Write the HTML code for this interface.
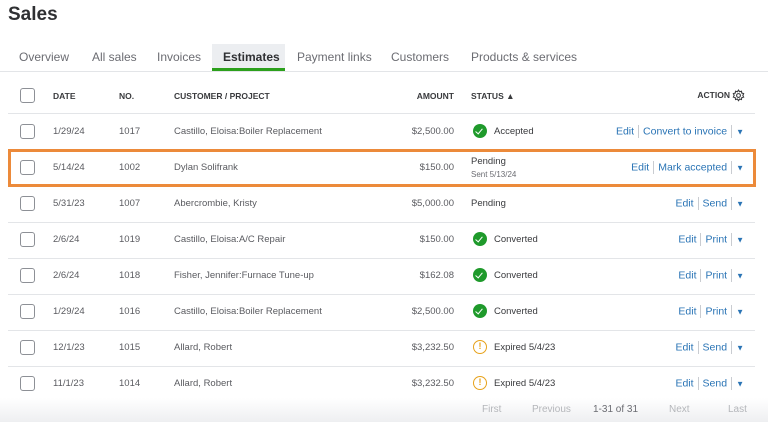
<!DOCTYPE html>
<html><head><style>
*{margin:0;padding:0;box-sizing:border-box}
body{width:768px;height:422px;overflow:hidden;background:#fff;font-family:"Liberation Sans",sans-serif;color:#393a3d;position:relative}
.a{position:absolute;white-space:nowrap}
.h1{left:8px;top:4px;font-size:19px;font-weight:bold;color:#2f3033}
.tab{top:50px;font-size:12px;color:#6b6c72}
.hd{font-size:8.5px;font-weight:bold;color:#393a3d}
.line{position:absolute;left:8px;width:747px;height:1px;background:#e3e5e8}
.cb{position:absolute;left:20px;width:15px;height:15px;border:1px solid #8d9096;border-radius:3px;background:#fff}
.c{font-size:9.5px;color:#5a5b60}
.lk{color:#2a74b5;font-size:10.5px}
.sep{display:inline-block;width:1px;height:13px;background:#c9ccd1;vertical-align:middle;margin:0 4px}
.ok{position:absolute;left:473px;width:14px;height:14px;border-radius:50%;background:#1f9a2b}
.ok:after{content:"";position:absolute;left:4px;top:3px;width:3px;height:6px;border:solid #fff;border-width:0 1.6px 1.6px 0;transform:rotate(40deg)}
.ex{position:absolute;left:473px;width:14px;height:14px;border-radius:50%;border:1.5px solid #e7a21b;color:#e7a21b;font-size:9px;font-weight:bold;text-align:center;line-height:11px}
.pg{top:404px;font-size:10px;color:#b4b6ba}
</style></head><body>
<div class="a h1">Sales</div>
<div class="a" style="left:212px;top:44px;width:73px;height:26px;background:#eceef1"></div>
<div class="a" style="left:212px;top:68px;width:73px;height:3px;background:#2ca01c"></div>
<div class="a tab" style="left:19px">Overview</div>
<div class="a tab" style="left:92px">All sales</div>
<div class="a tab" style="left:157px">Invoices</div>
<div class="a tab" style="left:223px;color:#2f3033;font-weight:bold">Estimates</div>
<div class="a tab" style="left:297px">Payment links</div>
<div class="a tab" style="left:391px">Customers</div>
<div class="a tab" style="left:471px">Products &amp; services</div>
<div class="a" style="left:0;top:71px;width:768px;height:1px;background:#e3e5e8"></div>

<div class="cb" style="top:88px"></div>
<div class="a hd" style="left:53px;top:91px">DATE</div>
<div class="a hd" style="left:119px;top:91px">NO.</div>
<div class="a hd" style="left:174px;top:91px">CUSTOMER / PROJECT</div>
<div class="a hd" style="right:314px;top:91px">AMOUNT</div>
<div class="a hd" style="left:471px;top:91px">STATUS ▲</div>
<div class="a hd" style="right:38px;top:90px">ACTION</div>
<svg class="a" style="left:732px;top:89px" width="13" height="13" viewBox="0 0 24 24" fill="none" stroke="#393a3d" stroke-width="2"><circle cx="12" cy="12" r="3.5"/><path d="M12 2l2 3 3.5-1 .5 3.5 3.5 1-1.5 3.5 1.5 3-3.5 1-.5 3.5-3.5-1-2 3-2-3-3.5 1-.5-3.5-3.5-1 1.5-3.5L2.5 8.5 6 7.5 6.5 4 10 5z"/></svg>
<div class="line" style="top:113px"></div>

<div class="cb" style="top:124px"></div>
<div class="a c" style="left:53px;top:126px">1/29/24</div><div class="a c" style="left:119px;top:126px">1017</div>
<div class="a c" style="left:174px;top:126px">Castillo, Eloisa:Boiler Replacement</div>
<div class="a c" style="right:314px;top:126px">$2,500.00</div>
<div class="ok" style="top:124px"></div><div class="a c" style="left:494px;top:126px;color:#393a3d">Accepted</div>
<div class="a lk" style="right:24px;top:125px">Edit<span class="sep"></span>Convert to invoice<span class="sep"></span><span style="font-size:8px">▼</span></div>
<div class="line" style="top:150px"></div>

<div class="cb" style="top:160px"></div>
<div class="a c" style="left:53px;top:162px">5/14/24</div><div class="a c" style="left:119px;top:162px">1002</div>
<div class="a c" style="left:174px;top:162px">Dylan Solifrank</div>
<div class="a c" style="right:314px;top:162px">$150.00</div>
<div class="a c" style="left:471px;top:156px;color:#393a3d">Pending</div>
<div class="a" style="left:471px;top:170px;font-size:8px;color:#6b6c72">Sent 5/13/24</div>
<div class="a lk" style="right:24px;top:161px">Edit<span class="sep"></span>Mark accepted<span class="sep"></span><span style="font-size:8px">▼</span></div>

<div class="cb" style="top:196px"></div>
<div class="a c" style="left:53px;top:198px">5/31/23</div><div class="a c" style="left:119px;top:198px">1007</div>
<div class="a c" style="left:174px;top:198px">Abercrombie, Kristy</div>
<div class="a c" style="right:314px;top:198px">$5,000.00</div>
<div class="a c" style="left:471px;top:198px;color:#393a3d">Pending</div>
<div class="a lk" style="right:24px;top:197px">Edit<span class="sep"></span>Send<span class="sep"></span><span style="font-size:8px">▼</span></div>
<div class="line" style="top:222px"></div>

<div class="cb" style="top:232px"></div>
<div class="a c" style="left:53px;top:234px">2/6/24</div><div class="a c" style="left:119px;top:234px">1019</div>
<div class="a c" style="left:174px;top:234px">Castillo, Eloisa:A/C Repair</div>
<div class="a c" style="right:314px;top:234px">$150.00</div>
<div class="ok" style="top:232px"></div><div class="a c" style="left:494px;top:234px;color:#393a3d">Converted</div>
<div class="a lk" style="right:24px;top:233px">Edit<span class="sep"></span>Print<span class="sep"></span><span style="font-size:8px">▼</span></div>
<div class="line" style="top:258px"></div>

<div class="cb" style="top:268px"></div>
<div class="a c" style="left:53px;top:270px">2/6/24</div><div class="a c" style="left:119px;top:270px">1018</div>
<div class="a c" style="left:174px;top:270px">Fisher, Jennifer:Furnace Tune-up</div>
<div class="a c" style="right:314px;top:270px">$162.08</div>
<div class="ok" style="top:268px"></div><div class="a c" style="left:494px;top:270px;color:#393a3d">Converted</div>
<div class="a lk" style="right:24px;top:269px">Edit<span class="sep"></span>Print<span class="sep"></span><span style="font-size:8px">▼</span></div>
<div class="line" style="top:294px"></div>

<div class="cb" style="top:304px"></div>
<div class="a c" style="left:53px;top:306px">1/29/24</div><div class="a c" style="left:119px;top:306px">1016</div>
<div class="a c" style="left:174px;top:306px">Castillo, Eloisa:Boiler Replacement</div>
<div class="a c" style="right:314px;top:306px">$2,500.00</div>
<div class="ok" style="top:304px"></div><div class="a c" style="left:494px;top:306px;color:#393a3d">Converted</div>
<div class="a lk" style="right:24px;top:305px">Edit<span class="sep"></span>Print<span class="sep"></span><span style="font-size:8px">▼</span></div>
<div class="line" style="top:330px"></div>

<div class="cb" style="top:340px"></div>
<div class="a c" style="left:53px;top:342px">12/1/23</div><div class="a c" style="left:119px;top:342px">1015</div>
<div class="a c" style="left:174px;top:342px">Allard, Robert</div>
<div class="a c" style="right:314px;top:342px">$3,232.50</div>
<div class="ex" style="top:340px">!</div><div class="a c" style="left:494px;top:342px;color:#393a3d">Expired 5/4/23</div>
<div class="a lk" style="right:24px;top:341px">Edit<span class="sep"></span>Send<span class="sep"></span><span style="font-size:8px">▼</span></div>
<div class="line" style="top:366px"></div>

<div class="cb" style="top:376px"></div>
<div class="a c" style="left:53px;top:378px">11/1/23</div><div class="a c" style="left:119px;top:378px">1014</div>
<div class="a c" style="left:174px;top:378px">Allard, Robert</div>
<div class="a c" style="right:314px;top:378px">$3,232.50</div>
<div class="ex" style="top:376px">!</div><div class="a c" style="left:494px;top:378px;color:#393a3d">Expired 5/4/23</div>
<div class="a lk" style="right:24px;top:377px">Edit<span class="sep"></span>Send<span class="sep"></span><span style="font-size:8px">▼</span></div>

<div class="a" style="left:0;top:398px;width:768px;height:24px;background:linear-gradient(#fff,#eeeff1)"></div>
<div class="a pg" style="left:482px">First</div>
<div class="a pg" style="left:532px">Previous</div>
<div class="a pg" style="left:593px;color:#6b6c72">1-31 of 31</div>
<div class="a pg" style="left:669px">Next</div>
<div class="a pg" style="left:728px">Last</div>

<div class="a" style="left:8px;top:149px;width:748px;height:38px;border:3px solid #ec8a3a"></div>
</body></html>
